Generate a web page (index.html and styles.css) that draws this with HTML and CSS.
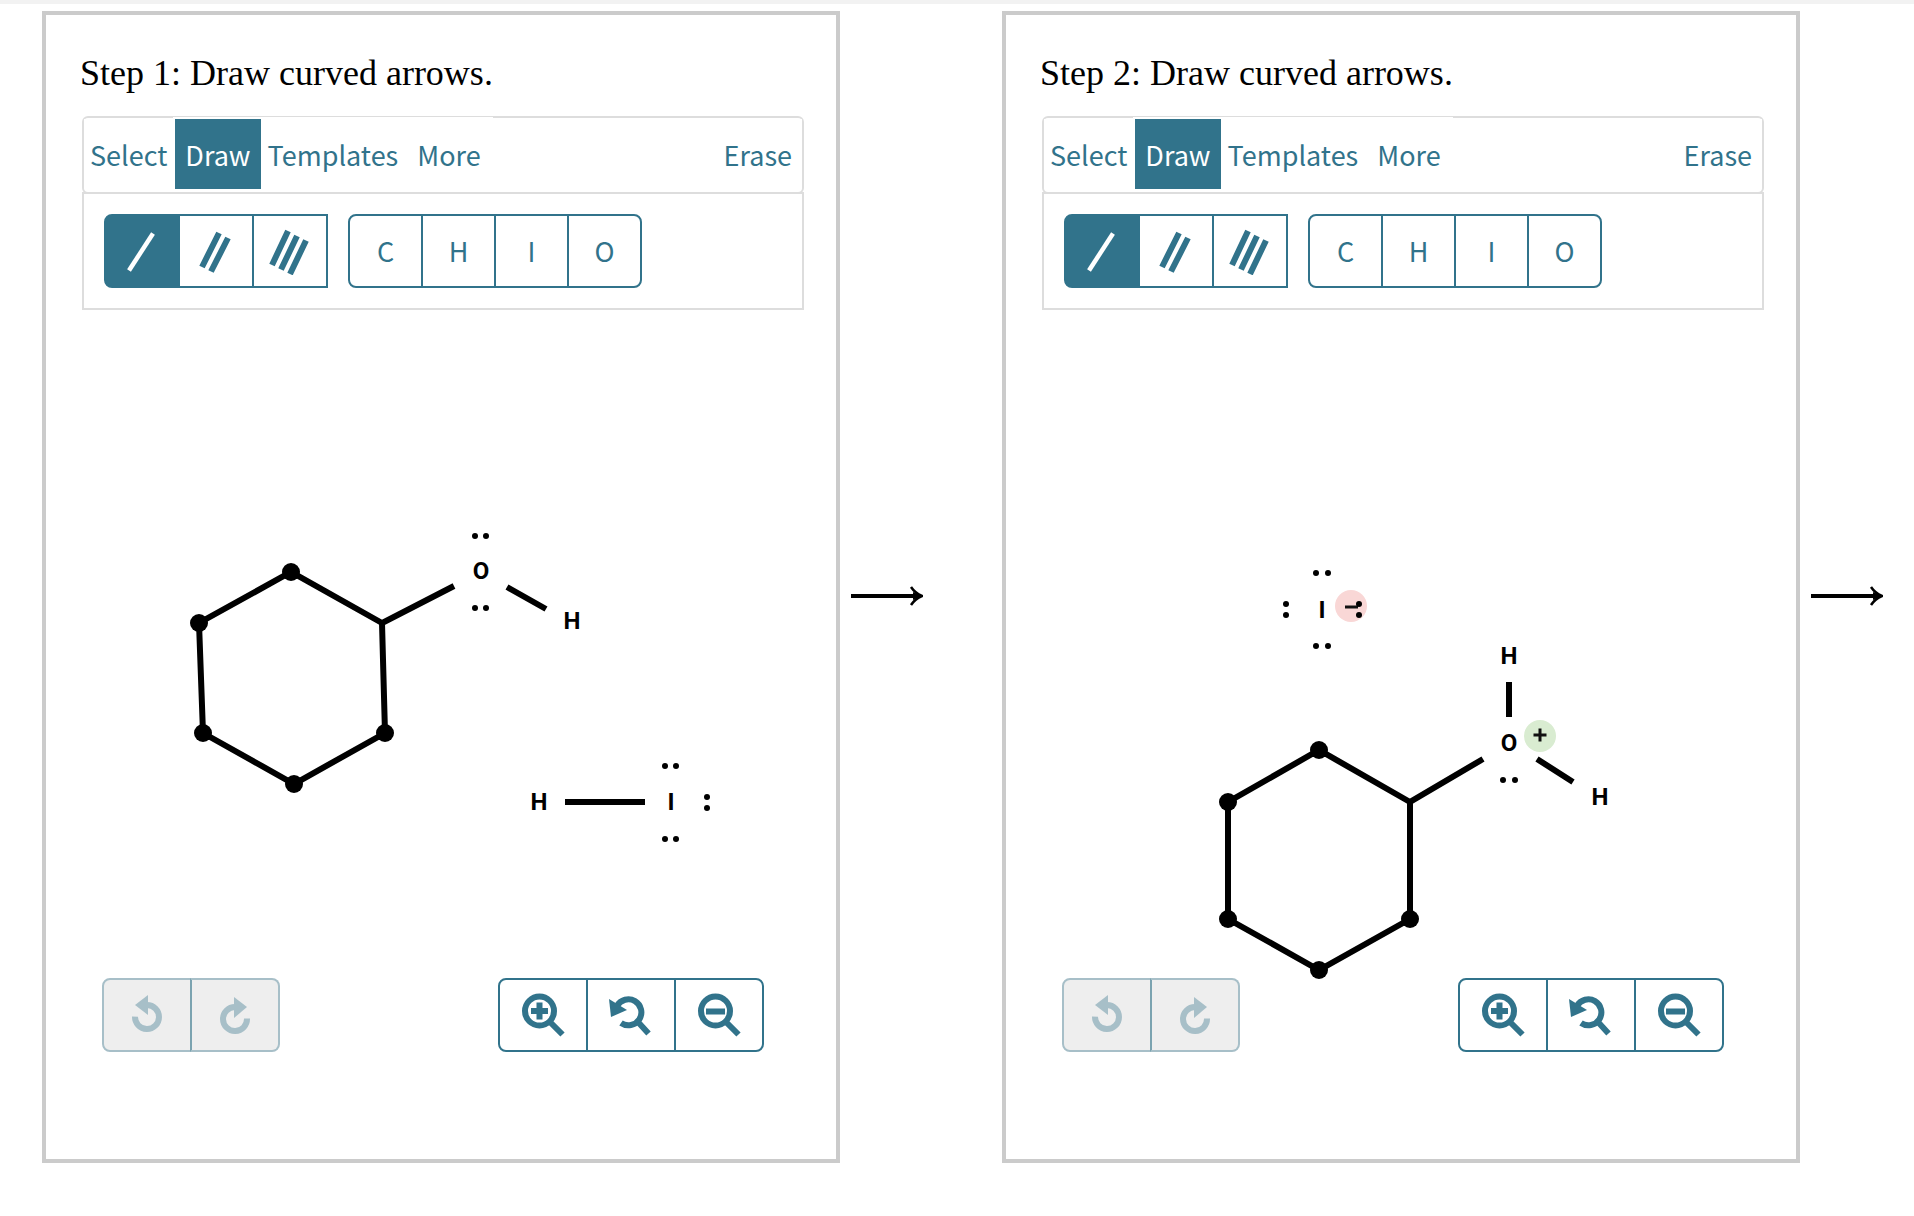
FILE: index.html
```html
<!DOCTYPE html>
<html lang="en">
<head>
    <meta charset="UTF-8">
    <title>Draw curved arrows</title>
    <link rel="stylesheet" href="styles.css">
</head>
<body>
    <!-- Shared icons -->
    <svg class="icon-defs" aria-hidden="true">
        <symbol id="bond-single" viewBox="0 0 48 48">
            <path d="M11 43.500L35 6.500" stroke-width="4.500"/>
        </symbol>
        <symbol id="bond-double" viewBox="0 0 48 48">
            <path d="M10 40L27 6M19 44.500L36 11"/>
        </symbol>
        <symbol id="bond-triple" viewBox="0 0 48 48">
            <path d="M6 38L22 4M15 42.500L31 9M24 47L40 13.500"/>
        </symbol>
        <symbol id="undo" viewBox="0 0 48 48">
            <path d="M12 25.500A12 12 0 1 0 24 14"/>
            <path class="solid" d="M12 14L25 4V24Z"/>
        </symbol>
        <symbol id="redo" viewBox="0 0 48 48">
            <path d="M36 27.500A12 12 0 1 1 24 16"/>
            <path class="solid" d="M36 16L23 6V27Z"/>
        </symbol>
        <symbol id="zoom-in" viewBox="0 0 48 48">
            <circle cx="20.500" cy="20" r="14.500"/>
            <path d="M12 20H29M20.500 11.500V28.500M31 31L43.500 43.500"/>
        </symbol>
        <symbol id="zoom-reset" viewBox="0 0 48 48">
            <path d="M10 15A13 13 0 1 1 14 32M31 31L41.500 42.500"/>
            <path class="solid" d="M2 8L4 26L20 19Z"/>
        </symbol>
        <symbol id="zoom-out" viewBox="0 0 48 48">
            <circle cx="20.500" cy="20" r="14.500"/>
            <path d="M11 20.500H30M31 31L43.500 43.500"/>
        </symbol>
        <symbol id="arrow" viewBox="0 0 72 22">
            <path d="M0 11H66" stroke-width="4"/>
            <path d="M60 2Q64 8 71 11Q64 14 60 20" stroke-width="2.500"/>
            <path class="solid" d="M62 7L72 11L62 15Z"/>
        </symbol>
    </svg>

    <main class="steps">
        <section class="step">
            <h2>Step 1: Draw curved arrows.</h2>
            <div class="editor">
                <div class="menu">
                    <button type="button" class="select">Select</button>
                    <div class="tabs">
                        <button type="button" class="active">Draw</button>
                        <button type="button">Templates</button>
                        <button type="button" class="more">More</button>
                    </div>
                    <button type="button" class="erase">Erase</button>
                </div>
                <div class="tools">
                    <div class="button-group bonds">
                        <button type="button" class="active" aria-label="Single bond"><svg class="icon"><use href="#bond-single"/></svg></button>
                        <button type="button" aria-label="Double bond"><svg class="icon"><use href="#bond-double"/></svg></button>
                        <button type="button" aria-label="Triple bond"><svg class="icon"><use href="#bond-triple"/></svg></button>
                    </div>
                    <div class="button-group atoms">
                        <button type="button">C</button>
                        <button type="button">H</button>
                        <button type="button">I</button>
                        <button type="button">O</button>
                    </div>
                </div>

                <!-- Cyclohexanol and hydrogen iodide -->
                <svg class="canvas" viewBox="0 0 722 668">
                    <path class="bond" d="M300 313L209 262L117 313L121 423L212 474L303 423L300 313L372 276M425 277L464 299"/>
                    <g class="carbon">
                        <circle cx="209" cy="262" r="9"/>
                        <circle cx="117" cy="313" r="9"/>
                        <circle cx="121" cy="423" r="9"/>
                        <circle cx="212" cy="474" r="9"/>
                        <circle cx="303" cy="423" r="9"/>
                    </g>
                    <text x="399" y="269">O</text>
                    <text x="490" y="319">H</text>
                    <g class="pair">
                        <circle cx="393" cy="226" r="3"/><circle cx="404" cy="226" r="3"/>
                        <circle cx="393" cy="298" r="3"/><circle cx="404" cy="298" r="3"/>
                    </g>
                    <path class="bond" d="M483 492H563"/>
                    <text x="457" y="500">H</text>
                    <text x="589" y="500">I</text>
                    <g class="pair">
                        <circle cx="583" cy="456" r="3"/><circle cx="594" cy="456" r="3"/>
                        <circle cx="583" cy="529" r="3"/><circle cx="594" cy="529" r="3"/>
                        <circle cx="625" cy="487" r="3"/><circle cx="625" cy="498" r="3"/>
                    </g>
                </svg>

                <div class="actions">
                    <div class="button-group">
                        <button type="button" disabled aria-label="Undo"><svg class="icon"><use href="#undo"/></svg></button>
                        <button type="button" disabled aria-label="Redo"><svg class="icon"><use href="#redo"/></svg></button>
                    </div>
                    <div class="button-group">
                        <button type="button" aria-label="Zoom in"><svg class="icon"><use href="#zoom-in"/></svg></button>
                        <button type="button" aria-label="Reset zoom"><svg class="icon"><use href="#zoom-reset"/></svg></button>
                        <button type="button" aria-label="Zoom out"><svg class="icon"><use href="#zoom-out"/></svg></button>
                    </div>
                </div>
            </div>
        </section>

        <div class="next"><svg><use href="#arrow"/></svg></div>

        <section class="step">
            <h2>Step 2: Draw curved arrows.</h2>
            <div class="editor">
                <div class="menu">
                    <button type="button" class="select">Select</button>
                    <div class="tabs">
                        <button type="button" class="active">Draw</button>
                        <button type="button">Templates</button>
                        <button type="button" class="more">More</button>
                    </div>
                    <button type="button" class="erase">Erase</button>
                </div>
                <div class="tools">
                    <div class="button-group bonds">
                        <button type="button" class="active" aria-label="Single bond"><svg class="icon"><use href="#bond-single"/></svg></button>
                        <button type="button" aria-label="Double bond"><svg class="icon"><use href="#bond-double"/></svg></button>
                        <button type="button" aria-label="Triple bond"><svg class="icon"><use href="#bond-triple"/></svg></button>
                    </div>
                    <div class="button-group atoms">
                        <button type="button">C</button>
                        <button type="button">H</button>
                        <button type="button">I</button>
                        <button type="button">O</button>
                    </div>
                </div>

                <!-- Iodide and the protonated alcohol -->
                <svg class="canvas" viewBox="0 0 722 668">
                    <circle class="negative" cx="309" cy="296" r="16"/>
                    <path class="sign" d="M303 297H316"/>
                    <text x="280" y="308">I</text>
                    <g class="pair">
                        <circle cx="274" cy="263" r="3"/><circle cx="286" cy="263" r="3"/>
                        <circle cx="274" cy="336" r="3"/><circle cx="286" cy="336" r="3"/>
                        <circle cx="244" cy="294" r="3"/><circle cx="244" cy="305" r="3"/>
                        <circle cx="317" cy="294" r="3"/><circle cx="317" cy="305" r="3"/>
                    </g>
                    <path class="bond" d="M368 492L277 440L186 492V609L277 660L368 609V492L441 449M467 372V407M495 449L531 472"/>
                    <g class="carbon">
                        <circle cx="277" cy="440" r="9"/>
                        <circle cx="186" cy="492" r="9"/>
                        <circle cx="186" cy="609" r="9"/>
                        <circle cx="277" cy="660" r="9"/>
                        <circle cx="368" cy="609" r="9"/>
                    </g>
                    <text x="467" y="354">H</text>
                    <text x="467" y="441">O</text>
                    <text x="558" y="495">H</text>
                    <circle class="positive" cx="498" cy="426" r="16"/>
                    <path class="sign" d="M491.500 425H504.500M498 418.500V431.500"/>
                    <g class="pair">
                        <circle cx="461" cy="470" r="3"/><circle cx="473" cy="470" r="3"/>
                    </g>
                </svg>

                <div class="actions">
                    <div class="button-group">
                        <button type="button" disabled aria-label="Undo"><svg class="icon"><use href="#undo"/></svg></button>
                        <button type="button" disabled aria-label="Redo"><svg class="icon"><use href="#redo"/></svg></button>
                    </div>
                    <div class="button-group">
                        <button type="button" aria-label="Zoom in"><svg class="icon"><use href="#zoom-in"/></svg></button>
                        <button type="button" aria-label="Reset zoom"><svg class="icon"><use href="#zoom-reset"/></svg></button>
                        <button type="button" aria-label="Zoom out"><svg class="icon"><use href="#zoom-out"/></svg></button>
                    </div>
                </div>
            </div>
        </section>

        <div class="next"><svg><use href="#arrow"/></svg></div>
    </main>
</body>
</html>
```
FILE: styles.css
```css
* {
    box-sizing: border-box;
}
body {
    margin: 0;
    border-top: 4px solid #f2f2f2;
    background: #fff;
    font-family: "Liberation Serif", serif;
}
.icon-defs {
    display: none;
}
.steps {
    display: flex;
    padding: 7px 0 0 42px;
}
.step {
    flex: 1;
    padding: 38px 32px 107px 34px;
    border: 4px solid #cbcbcb;
}
h2 {
    margin: 0 0 23px;
    font-size: 36px;
    font-weight: normal;
    line-height: 40px;
    color: #000;
}
.editor {
    margin-left: 2px;
}
button {
    margin: 0;
    padding: 0;
    border: 0;
    background: #fff;
    color: #31738b;
    font-family: "Noto Sans CJK SC", sans-serif;
    font-size: 27px;
    cursor: pointer;
}

/* Menu row */
.menu {
    display: flex;
    height: 78px;
    border: 2px solid #ddd;
    border-radius: 6px;
}
.menu button {
    height: 70px;
    margin-top: 1px;
    padding: 0 7px;
}
.menu .select {
    padding: 0 6px;
}
.tabs {
    display: flex;
    height: 73px;
    margin-top: -1px;
    padding: 1px 0 0 2px;
    background: #fff;
}
.tabs .active {
    padding: 0 10px;
}
.tabs .more {
    padding: 0 12px;
}
.menu .erase {
    margin-left: auto;
    padding-right: 10px;
}
.active {
    background: #31738b;
    color: #fff;
}

/* Bond and atom pickers */
.tools {
    display: flex;
    gap: 20px;
    margin-top: -2px;
    padding: 20px;
    border: 2px solid #ddd;
}
.button-group {
    display: flex;
}
.button-group button {
    display: flex;
    align-items: center;
    justify-content: center;
    width: 90px;
    height: 74px;
    border: 2px solid #31738b;
}
.button-group button + button {
    margin-left: -2px;
}
.button-group button:first-child {
    border-radius: 8px 0 0 8px;
}
.button-group button:last-child {
    border-radius: 0 8px 8px 0;
}
.bonds button {
    width: 76px;
}
.bonds button:last-child {
    border-radius: 0;
}
.atoms button {
    width: 75px;
    padding-bottom: 2px;
}
.button-group button:disabled {
    border-color: #a7bfc8;
    background: #eee;
    color: #a7bfc8;
    cursor: default;
}
.button-group button:disabled + button:disabled {
    border-left-color: #7ba3b0;
}
.icon {
    width: 48px;
    height: 48px;
    fill: none;
    stroke: currentColor;
    stroke-width: 6;
}
.solid {
    fill: currentColor;
    stroke: none;
}

/* Bonds group keeps its own width */
.button-group.bonds button {
    width: 76px;
}
.button-group.bonds button:last-child {
    border-radius: 0;
}
.button-group.atoms button {
    width: 75px;
}

/* Molecules */
.canvas {
    display: block;
    width: 100%;
    overflow: visible;
}
.canvas text {
    font-family: Roboto, sans-serif;
    font-size: 24px;
    font-weight: bold;
    text-anchor: middle;
}
.bond {
    fill: none;
    stroke: #000;
    stroke-width: 6;
}
.sign {
    fill: none;
    stroke: #111;
    stroke-width: 3;
}
.negative {
    fill: #f9d7d6;
}
.positive {
    fill: #d9ecd1;
}

.actions {
    display: flex;
    justify-content: space-between;
    padding: 0 40px 0 20px;
}

/* Arrow to the next step */
.next {
    align-self: center;
    padding: 18px 79px 0 11px;
}
.next:last-child {
    padding-right: 31px;
}
.next svg {
    display: block;
    width: 72px;
    height: 22px;
    fill: none;
    stroke: #000;
}
```
